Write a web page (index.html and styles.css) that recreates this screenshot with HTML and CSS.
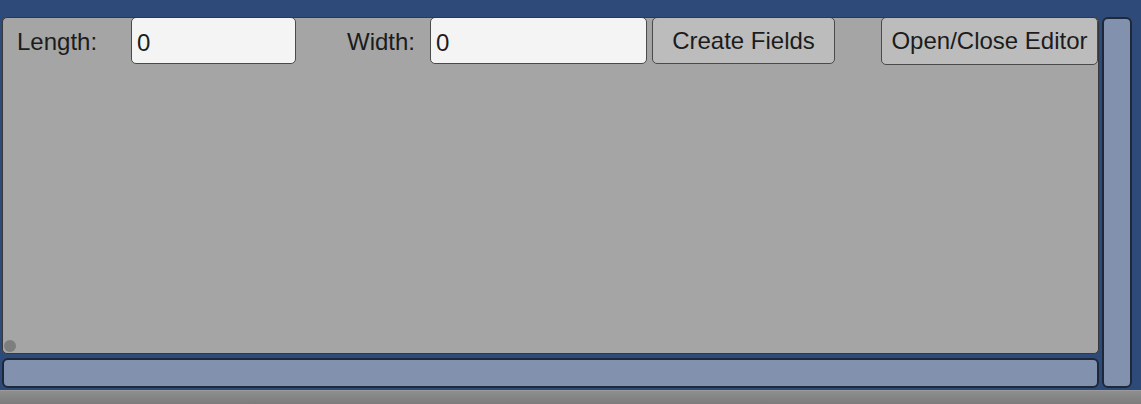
FILE: index.html
```html
<!DOCTYPE html>
<html>
<head>
<meta charset="utf-8">
<link rel="stylesheet" href="styles.css">
</head>
<body>
<div class="window">
  <div class="panel">
    <div class="toolbar">
      <span class="label label-length">Length:</span>
      <div class="field field-length">0</div>
      <span class="label label-width">Width:</span>
      <div class="field field-width">0</div>
      <div class="btn btn-create">Create Fields</div>
      <div class="btn btn-editor">Open/Close Editor</div>
    </div>
    <div class="dot"></div>
  </div>
  <div class="vbar"></div>
  <div class="hbar"></div>
</div>
<div class="statusbar"></div>
</body>
</html>
```
FILE: styles.css
```css
html, body {
  margin: 0;
  padding: 0;
}
body {
  width: 1141px;
  height: 404px;
  overflow: hidden;
  background: #2e4a78;
  font-family: "Liberation Sans", Arial, sans-serif;
  color: #1c1c1c;
}
.window {
  box-sizing: border-box;
  height: 390px;
  padding: 17px 9px 2px 2px;
  display: grid;
  grid-template-columns: 1097px 30px;
  grid-template-rows: 337px 30px;
  column-gap: 3px;
  row-gap: 4px;
}
.panel {
  position: relative;
  grid-column: 1;
  grid-row: 1;
  box-sizing: border-box;
  background: #a5a5a5;
  border: 1px solid #383838;
  border-radius: 5px;
  overflow: hidden;
}
.vbar {
  grid-column: 2;
  grid-row: 1 / span 2;
  box-sizing: border-box;
  background: #8191ae;
  border: 2px solid #1f2838;
  border-radius: 6px;
}
.hbar {
  grid-column: 1;
  grid-row: 2;
  box-sizing: border-box;
  background: #8191ae;
  border: 2px solid #1f2838;
  border-radius: 6px;
}
.toolbar {
  display: flex;
  align-items: center;
  height: 47px;
  margin-top: -1px;
  font-size: 24px;
}
.label {
  box-sizing: border-box;
  line-height: 47px;
  padding-top: 2px;
}
.label-length {
  width: 128px;
  padding-left: 14px;
}
.label-width {
  width: 134px;
  padding-left: 51px;
}
.field {
  box-sizing: border-box;
  height: 47px;
  background: #f4f4f4;
  border: 1px solid #4a4a4a;
  border-radius: 5px;
  padding-left: 5px;
  line-height: 47px;
  padding-top: 1px;
}
.field-length {
  width: 165px;
}
.field-width {
  width: 217px;
}
.btn {
  box-sizing: border-box;
  height: 47px;
  background: #bcbcbc;
  border: 1px solid #4a4a4a;
  border-radius: 5px;
  text-align: center;
  line-height: 45px;
}
.btn-create {
  width: 183px;
  margin-left: 5px;
}
.btn-editor {
  width: 217px;
  margin-left: 46px;
  height: 48px;
}
.dot {
  position: absolute;
  left: 1px;
  bottom: 1px;
  width: 12px;
  height: 12px;
  border-radius: 50%;
  background: #7e7e7e;
}
.statusbar {
  height: 14px;
  background: linear-gradient(#8e8e8e, #7c7c7c);
  border-top: 1px solid #9a9a9a;
  box-sizing: border-box;
}
```
